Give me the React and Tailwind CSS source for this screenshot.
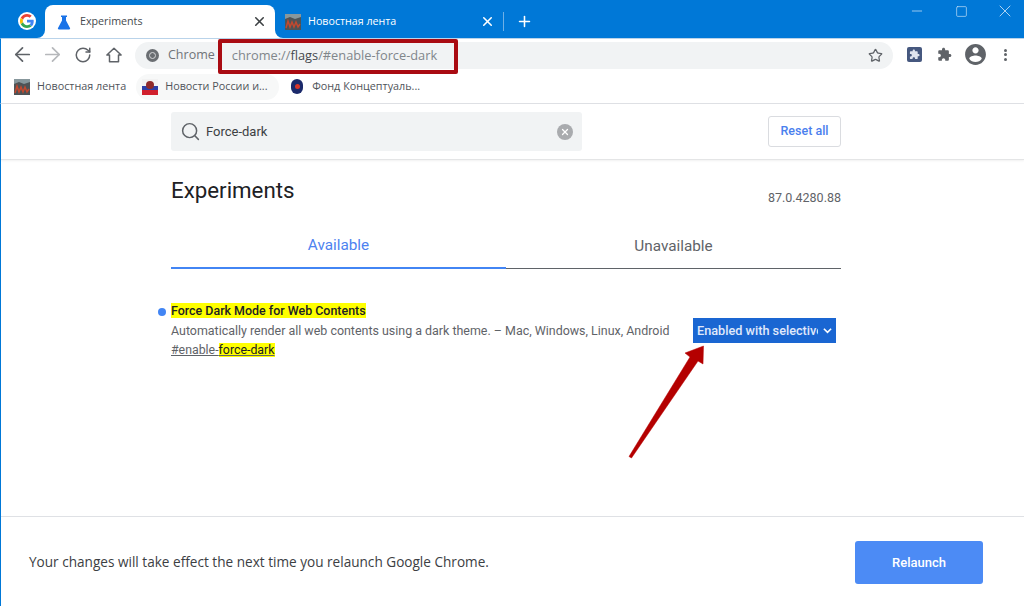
import { ArrowLeft, ArrowRight, RotateCw, Star, X, Plus, Minus, Square, Search } from 'lucide-react'

const puzzlePath = 'M20.500 11H19V7c0-1.100-.9-2-2-2h-4V3.500C13 2.120 11.880 1 10.500 1S8 2.120 8 3.500V5H4c-1.100 0-1.990.9-1.990 2v3.800H3.500c1.490 0 2.700 1.210 2.700 2.700s-1.210 2.700-2.700 2.700H2V20c0 1.100.9 2 2 2h3.800v-1.500c0-1.490 1.210-2.700 2.700-2.700 1.490 0 2.700 1.210 2.700 2.700V22H17c1.100 0 2-.9 2-2v-4h1.500c1.380 0 2.500-1.120 2.500-2.500S21.880 11 20.500 11z'

function Thumb({ className }) {
  return (
    <svg viewBox="0 0 16 16" className={className}>
      <rect width="16" height="16" fill="#4d5356" />
      <path d="M0 5 L5 3 L10 5 L16 3 V0 H0 Z" fill="#87979c" />
      <path d="M1 14 L3 7 L5 13 L7 8 L9 13 L11 8 L13 13 L15 10" fill="none" stroke="#c2492f" strokeWidth="1.500" />
    </svg>
  )
}

function GoogleLogo() {
  return (
    <div className="w-[18px] h-[18px] rounded-full bg-white flex items-center justify-center">
      <svg viewBox="0 0 48 48" className="w-[14px] h-[14px]">
        <path fill="#EA4335" d="M24 9.500c3.500 0 6.700 1.200 9.200 3.600l6.900-6.900C35.900 2.400 30.500 0 24 0 14.600 0 6.500 5.400 2.600 13.200l8 6.200C12.500 13.600 17.800 9.500 24 9.500z" />
        <path fill="#4285F4" d="M47 24.500c0-1.600-.1-3.100-.4-4.500H24v9h13c-.6 3-2.200 5.500-4.700 7.200l7.700 6C44.400 38.100 47 31.900 47 24.500z" />
        <path fill="#FBBC05" d="M10.500 28.600A14.500 14.500 0 0 1 10.500 19.400l-8-6.200a24 24 0 0 0 0 21.600z" />
        <path fill="#34A853" d="M24 48c6.500 0 11.900-2.100 15.900-5.800l-7.700-6c-2.100 1.400-4.900 2.300-8.200 2.300-6.200 0-11.500-4.100-13.400-9.900l-8 6.200C6.500 42.600 14.600 48 24 48z" />
      </svg>
    </div>
  )
}

function Arrow() {
  return (
    <svg className="absolute left-[625px] top-[340px] pointer-events-none" width="85" height="125" viewBox="0 0 85 125">
      <path d="M4 116.500 L6.500 118 L73 21 L78 24 L78.500 6 L60 13 L65 17 Z" fill="#b40000" stroke="#b40000" strokeWidth="0.500" strokeLinejoin="round" />
    </svg>
  )
}

export default function App() {
  return (
    <div className="relative w-[1024px] h-[606px] overflow-hidden bg-white flex flex-col font-['Roboto',sans-serif] text-[#5f6368]">
      {/* title bar */}
      <div className="h-[38px] bg-[#0078d7] flex items-end shrink-0 relative">
        <div className="w-[45px] h-[33px] flex items-center justify-center pl-[8px] pb-[1px]">
          <GoogleLogo />
        </div>
        <div className="relative w-[230px] h-[33px] bg-white rounded-t-[8px] flex items-center pl-[11px] pr-[8px]">
          <div className="absolute -left-[8px] bottom-0 w-[8px] h-[8px] bg-white">
            <div className="w-full h-full bg-[#0078d7] rounded-br-[8px]"></div>
          </div>
          <div className="absolute -right-[8px] bottom-0 w-[8px] h-[8px] bg-white">
            <div className="w-full h-full bg-[#0078d7] rounded-bl-[8px]"></div>
          </div>
          <svg viewBox="0 0 16 16" className="w-[16px] h-[16px] text-[#1a73e8] mr-[5px] shrink-0">
            <path d="M5 1.500h6v1.500h-1v3.500l4 7.500a1 1 0 0 1-1 1.500H3a1 1 0 0 1-1-1.500l4-7.500V3H5z" fill="currentColor" />
          </svg>
          <span className="text-[10.700px] font-['Open_Sans',sans-serif] text-[#45494d] ml-[3px] flex-1">Experiments</span>
          <X size={15} strokeWidth={2.500} className="text-[#3c4043]" />
        </div>
        <div className="w-[228px] h-[33px] flex items-center pl-[10px] pr-[8px]">
          <Thumb className="w-[16px] h-[16px] mr-[7px]" />
          <span className="text-[10.700px] font-['Open_Sans',sans-serif] text-white flex-1">Новостная лента</span>
          <X size={15} strokeWidth={2.500} className="text-white" />
        </div>
        <div className="w-px h-[19px] bg-[#6fb0e6] mb-[7px]"></div>
        <Plus size={17} strokeWidth={2.200} className="text-white ml-[12px] mb-[8px]" />
        <div className="ml-auto self-start flex items-center text-[#cfe4f7] pt-[2px] -mr-[3px]">
          <div className="w-[44px] h-[18px] flex items-center justify-center"><Minus size={16} strokeWidth={1.100} /></div>
          <div className="w-[44px] h-[18px] flex items-center justify-center"><Square size={13} strokeWidth={1.200} /></div>
          <div className="w-[44px] h-[18px] flex items-center justify-center"><X size={20} strokeWidth={1} /></div>
        </div>
      </div>

      {/* toolbar */}
      <div className="h-[32px] shrink-0 flex items-center pl-[6px] border-t border-t-[#b9d3ea] border-l border-l-[#0078d7]">
        <div className="w-[30.500px] flex justify-center"><ArrowLeft size={23} strokeWidth={1.800} className="text-[#5f6368]" /></div>
        <div className="w-[30.500px] flex justify-center"><ArrowRight size={23} strokeWidth={1.800} className="text-[#b6b8bb]" /></div>
        <div className="w-[30.500px] flex justify-center"><RotateCw size={18} strokeWidth={2} className="text-[#5f6368]" /></div>
        <div className="w-[30.500px] flex justify-center">
          <svg viewBox="0 0 24 24" className="w-[18px] h-[18px] text-[#5f6368]">
            <path d="M12 3 L2.500 12 H6 V21 H18 V12 H21.500 Z" fill="none" stroke="currentColor" strokeWidth="2" strokeLinejoin="round" />
          </svg>
        </div>
        <div className="ml-[6px] w-[758px] h-[27px] rounded-full bg-[#f1f3f4] flex items-center pl-[11px] pr-[10px] mt-[2px] shrink-0">
          <div className="w-[13px] h-[13px] rounded-full bg-[#6a6e72] flex items-center justify-center shrink-0">
            <div className="w-[7px] h-[7px] rounded-full bg-[#6a6e72] border border-[#d5d7d9]"></div>
          </div>
          <span className="ml-[9px] text-[12.500px] font-['Open_Sans',sans-serif] text-[#707478]">Chrome</span>
          <span className="ml-[17px] text-[12.800px] font-['Open_Sans',sans-serif] text-[#80868b]">chrome://<span className="text-[#45494d]">flags</span>/#enable-force-dark</span>
          <Star size={15} strokeWidth={2} className="ml-auto text-[#5f6368]" />
        </div>
        <div className="ml-[14px] w-[15px] h-[15px] rounded-[2px] bg-[#46587f] flex items-center justify-center shrink-0">
          <svg viewBox="0 0 24 24" className="w-[11px] h-[11px]"><path d={puzzlePath} fill="#dfe4ee" /></svg>
        </div>
        <svg viewBox="0 0 24 24" className="ml-[15px] w-[15px] h-[15px] shrink-0"><path d={puzzlePath} fill="#5f6368" /></svg>
        <svg viewBox="0 0 24 24" className="ml-[11px] w-[25px] h-[25px] shrink-0">
          <path fill="#5f6368" d="M12 2C6.480 2 2 6.480 2 12s4.480 10 10 10 10-4.480 10-10S17.520 2 12 2zm0 3c1.660 0 3 1.340 3 3s-1.340 3-3 3-3-1.340-3-3 1.340-3 3-3zm0 14.200c-2.500 0-4.710-1.280-6-3.220.03-1.990 4-3.080 6-3.080 1.990 0 5.970 1.090 6 3.080-1.290 1.940-3.500 3.220-6 3.220z" />
        </svg>
        <div className="ml-[16px] flex flex-col gap-[1.500px] items-center w-[3px]">
          <div className="w-[3px] h-[3px] rounded-full bg-[#5f6368]"></div>
          <div className="w-[3px] h-[3px] rounded-full bg-[#5f6368]"></div>
          <div className="w-[3px] h-[3px] rounded-full bg-[#5f6368]"></div>
        </div>
      </div>

      {/* bookmarks */}
      <div className="h-[34px] shrink-0 flex items-center pl-[13px] text-[10.800px] font-['Open_Sans',sans-serif] text-[#50545a] border-b border-b-[#dfe1e5] border-l border-l-[#0078d7]">
        <Thumb className="w-[16px] h-[16px] mr-[7px]" />
        <span>Новостная лента</span>
        <div className="ml-[10px] h-[26px] w-[143px] bg-[#f7f8f8] rounded-full flex items-center pl-[6px]">
          <svg viewBox="0 0 16 16" className="w-[16px] h-[16px] mr-[7px] shrink-0">
            <rect width="16" height="16" fill="#f2f2f2" />
            <rect y="7" width="16" height="4" fill="#2b3fa8" />
            <rect y="11" width="16" height="5" fill="#d01f2c" />
            <circle cx="8" cy="6" r="4" fill="#8f2a2a" />
          </svg>
          <span className="whitespace-nowrap">Новости России и...</span>
        </div>
        <div className="ml-[12px] w-[12px] h-[15px] rounded-full bg-[#1b2a6b] flex items-center justify-center shrink-0">
          <div className="w-[5px] h-[5px] rounded-full bg-[#d8352a]"></div>
        </div>
        <span className="ml-[9px]">Фонд Концептуаль...</span>
      </div>

      {/* page */}
      <div className="flex-1 flex flex-col border-l border-[#0078d7] min-h-0">
        <div className="h-[56px] shrink-0 border-b border-[#e4e5e6] shadow-[0_1px_2px_rgba(0,0,0,0.06)] flex items-center pl-[170px] pr-[183px] justify-between">
          <div className="w-[411px] h-[39px] rounded-[3px] bg-[#f1f3f4] flex items-center pl-[9px] pr-[9px]">
            <Search size={21} strokeWidth={1.700} className="text-[#5f6368]" />
            <span className="ml-[5px] text-[13px] text-[#3c4043] flex-1">Force-dark</span>
            <div className="w-[16px] h-[16px] rounded-full bg-[#a9abae] flex items-center justify-center">
              <X size={10} strokeWidth={3} className="text-white" />
            </div>
          </div>
          <div className="w-[73px] h-[31px] rounded-[3px] border border-[#dadce0] flex items-center justify-center text-[12.500px] font-medium text-[#4a80ee]">Reset all</div>
        </div>

        <div className="flex-1 pl-[170px] pr-[183px] min-h-0">
          <div className="flex justify-between items-start pt-[17px]">
            <h1 className="text-[22.300px] leading-[26px] font-normal text-[#202124]">Experiments</h1>
            <span className="text-[12.500px] mt-[12px] text-[#5f6368]">87.0.4280.88</span>
          </div>
          <div className="flex mt-[20px] h-[41px]">
            <div className="w-[335px] border-b-2 border-[#4285f4] flex justify-center pt-[6px] text-[15.300px] text-[#4d82f0]">Available</div>
            <div className="flex-1 border-b border-[#5f6368] flex justify-center pt-[6px] text-[15.300px] text-[#5f6368] h-[40px] mt-[1px]">Unavailable</div>
          </div>
          <div className="relative flex justify-between mt-[34px]">
            <div className="absolute left-[-13px] top-[5px] w-[8px] h-[8px] rounded-full bg-[#4285f4]"></div>
            <div>
              <div className="text-[12.450px] leading-[16px] font-medium text-[#202124]"><span className="bg-[#ffff00]">Force Dark Mode for Web Contents</span></div>
              <div className="text-[12.450px] leading-[20px] mt-[2px] text-[#5f6368]">Automatically render all web contents using a dark theme. – Mac, Windows, Linux, Android</div>
              <div className="text-[12.350px] leading-[18px] text-[#5f6368] underline">#enable-<span className="bg-[#ffff00] text-[#202124]">force-dark</span></div>
            </div>
            <div className="w-[143px] h-[25px] mt-[15px] mr-[5px] bg-[#1a66d2] flex items-center pl-[4px] text-[12.700px] font-medium text-[#e0e9fb]">
              <span className="w-[121px] overflow-hidden whitespace-nowrap shrink-0">Enabled with selective</span>
              <svg viewBox="0 0 10 10" className="w-[9px] h-[9px] ml-[5px]">
                <path d="M1 3 L5 7 L9 3" fill="none" stroke="white" strokeWidth="1.800" />
              </svg>
            </div>
          </div>
        </div>

        <div className="h-[90px] shrink-0 border-t border-[#dfe1e5] flex items-center justify-between pl-[28px] pr-[41px]">
          <span className="text-[13.600px] mt-[1px] text-[#3c4043] font-['Open_Sans',sans-serif]">Your changes will take effect the next time you relaunch Google Chrome.</span>
          <div className="w-[128px] h-[43px] mt-[2px] rounded-[3px] bg-[#4c8bf5] flex items-center justify-center text-white text-[13px] font-medium">Relaunch</div>
        </div>
      </div>

      {/* annotations */}
      <div className="absolute left-[218px] top-[39px] w-[240px] h-[35px] border-[4px] border-[#a90b12] rounded-[2px]"></div>
      <Arrow />
    </div>
  )
}
